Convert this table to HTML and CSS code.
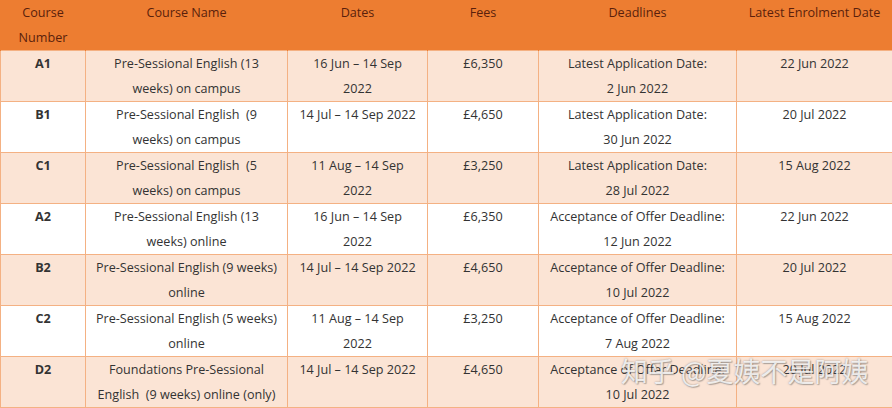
FILE: index.html
```html
<!DOCTYPE html>
<html>
<head>
<meta charset="utf-8">
<link rel="stylesheet" href="styles.css">
</head>
<body>
<div class="wrap">
<table class="courses">
<colgroup>
<col class="c1"><col class="c2"><col class="c3"><col class="c4"><col class="c5"><col class="c6">
</colgroup>
<thead>
<tr><th>Course Number</th><th>Course Name</th><th>Dates</th><th>Fees</th><th>Deadlines</th><th>Latest Enrolment Date</th></tr>
</thead>
<tbody>
<tr class="alt"><td class="code">A1</td><td>Pre-Sessional English (13<br>weeks) on campus</td><td>16 Jun – 14 Sep<br>2022</td><td>£6,350</td><td>Latest Application Date:<br>2 Jun 2022</td><td>22 Jun 2022</td></tr>
<tr><td class="code">B1</td><td>Pre-Sessional English&nbsp; (9<br>weeks) on campus</td><td>14 Jul – 14 Sep 2022</td><td>£4,650</td><td>Latest Application Date:<br>30 Jun 2022</td><td>20 Jul 2022</td></tr>
<tr class="alt"><td class="code">C1</td><td>Pre-Sessional English&nbsp; (5<br>weeks) on campus</td><td>11 Aug – 14 Sep<br>2022</td><td>£3,250</td><td>Latest Application Date:<br>28 Jul 2022</td><td>15 Aug 2022</td></tr>
<tr><td class="code">A2</td><td>Pre-Sessional English (13<br>weeks) online</td><td>16 Jun – 14 Sep<br>2022</td><td>£6,350</td><td>Acceptance of Offer Deadline:<br>12 Jun 2022</td><td>22 Jun 2022</td></tr>
<tr class="alt"><td class="code">B2</td><td>Pre-Sessional English (9 weeks)<br>online</td><td>14 Jul – 14 Sep 2022</td><td>£4,650</td><td>Acceptance of Offer Deadline:<br>10 Jul 2022</td><td>20 Jul 2022</td></tr>
<tr><td class="code">C2</td><td>Pre-Sessional English (5 weeks)<br>online</td><td>11 Aug – 14 Sep<br>2022</td><td>£3,250</td><td>Acceptance of Offer Deadline:<br>7 Aug 2022</td><td>15 Aug 2022</td></tr>
<tr class="alt"><td class="code">D2</td><td>Foundations Pre-Sessional<br>English&nbsp; (9 weeks) online (only)</td><td>14 Jul – 14 Sep 2022</td><td>£4,650</td><td>Acceptance of Offer Deadline:<br>10 Jul 2022</td><td>20 Jul 2022</td></tr>
</tbody>
</table>
<div class="watermark">知乎 @夏姨不是阿姨</div>
</div>
</body>
</html>
```
FILE: styles.css
```css
html, body {
  margin: 0;
  padding: 0;
  background: #ffffff;
}
.wrap {
  position: relative;
  width: 892px;
  height: 408px;
  overflow: hidden;
}
.courses {
  width: 892px;
  border-collapse: collapse;
  table-layout: fixed;
  font-family: "Open Sans", "Liberation Sans", sans-serif;
  font-size: 12.6px;
  line-height: 25px;
  color: #333333;
}
.c1 { width: 85px; }
.c2 { width: 202px; }
.c3 { width: 140px; }
.c4 { width: 111px; }
.c5 { width: 198px; }
.c6 { width: 156px; }
.courses th {
  background: #ED7D31;
  color: #5a1f0c;
  font-weight: normal;
  height: 50px;
  padding: 0 4px;
  vertical-align: top;
  border-left: 1px solid #ED7D31;
  border-right: 1px solid #ED7D31;
  box-sizing: border-box;
}
.courses th:first-child {
  padding: 0 14px;
}
.courses td {
  border: 1px solid #F4B183;
  padding: 0 2px;
  height: 49px;
  box-sizing: border-box;
  text-align: center;
  vertical-align: top;
  white-space: nowrap;
}
.courses tr.alt td {
  background: #FBE4D5;
}
.courses td.code {
  font-weight: bold;
}
.watermark {
  position: absolute;
  left: 621px;
  top: 354px;
  font-family: "Noto Sans CJK SC", sans-serif;
  font-size: 27px;
  line-height: 34px;
  color: rgba(255, 255, 255, 0.82);
  text-shadow: 0 0 2px rgba(90, 90, 90, 0.6), 1px 1px 1px rgba(100, 100, 100, 0.4);
  white-space: nowrap;
}
```
